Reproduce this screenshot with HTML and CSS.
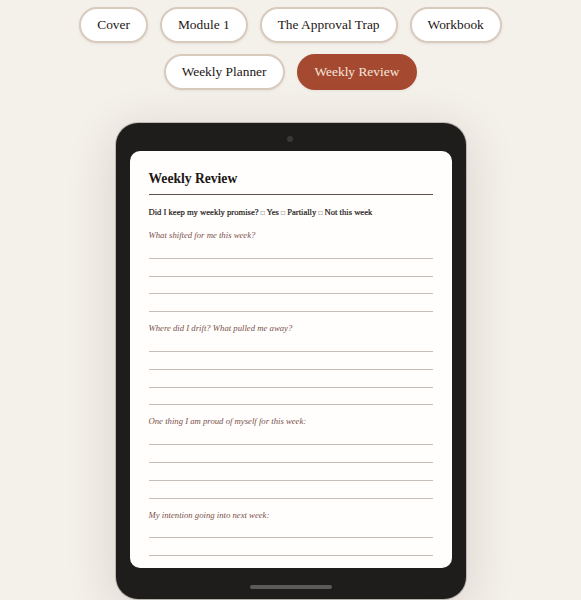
FILE: index.html
```html
<!DOCTYPE html>
<html lang="en">
<head>
<meta charset="utf-8">
<title>Weekly Review</title>
<link rel="stylesheet" href="styles.css">
</head>
<body>
<nav class="tabs">
  <button class="tab">Cover</button>
  <button class="tab">Module 1</button>
  <button class="tab">The Approval Trap</button>
  <button class="tab">Workbook</button>
  <button class="tab">Weekly Planner</button>
  <button class="tab active">Weekly Review</button>
</nav>
<div class="tablet">
  <div class="camera"></div>
  <div class="screen">
    <h1 class="title">Weekly Review</h1>
    <p class="promise">Did I keep my weekly promise? <span class="box">□</span> Yes <span class="box">□</span> Partially <span class="box">□</span> Not this week</p>
    <section class="block">
      <p class="prompt">What shifted for me this week?</p>
      <div class="line"></div><div class="line"></div><div class="line"></div><div class="line"></div>
    </section>
    <section class="block">
      <p class="prompt">Where did I drift? What pulled me away?</p>
      <div class="line"></div><div class="line"></div><div class="line"></div><div class="line"></div>
    </section>
    <section class="block">
      <p class="prompt">One thing I am proud of myself for this week:</p>
      <div class="line"></div><div class="line"></div><div class="line"></div><div class="line"></div>
    </section>
    <section class="block">
      <p class="prompt">My intention going into next week:</p>
      <div class="line"></div><div class="line"></div><div class="line"></div><div class="line"></div>
    </section>
  </div>
  <div class="homebar"></div>
</div>
</body>
</html>
```

FILE: styles.css
```css
* { box-sizing: border-box; }
html, body { height: 100%; }
body {
  margin: 0;
  background: #f4f0ea;
  font-family: "Liberation Serif", "DejaVu Serif", serif;
  color: #2a2320;
  overflow: hidden;
}
.tabs {
  max-width: 440px;
  margin: 0 auto;
  padding-top: 7px;
  display: flex;
  flex-wrap: wrap;
  justify-content: center;
  gap: 11px 12px;
}
.tab {
  height: 36px;
  padding: 0 16px;
  border: 2px solid #d8cabd;
  border-radius: 18px;
  background: #ffffff;
  font-family: "Liberation Serif", "DejaVu Serif", serif;
  font-size: 13.4px;
  color: #1c1613;
  box-shadow: 0 1px 3px rgba(80, 60, 40, 0.08);
}
.tab.active {
  background: #a54a31;
  border-color: #a54a31;
  color: #f6e6dc;
}
.tablet {
  width: 350px;
  margin: 33px auto 0;
  padding: 28px 14px 0;
  background: #1f1d1c;
  border-radius: 22px;
  position: relative;
  height: 476px;
  box-shadow: 0 10px 50px rgba(70, 50, 30, 0.16), 0 0 0 1px rgba(0,0,0,0.2);
}
.camera {
  position: absolute;
  top: 13px;
  left: 171px;
  width: 6px;
  height: 6px;
  border-radius: 50%;
  background: #3a3837;
}
.homebar {
  position: absolute;
  left: 134px;
  bottom: 10px;
  width: 82px;
  height: 4px;
  border-radius: 2px;
  background: #5c5a59;
}
.screen {
  background: #fffefd;
  border-radius: 10px;
  height: 417px;
  overflow: hidden;
  padding: 20px 19px 0;
}
.title {
  margin: 0;
  font-size: 13.6px;
  line-height: 16px;
  font-weight: bold;
  color: #1e1816;
  padding-bottom: 7px;
  border-bottom: 1.5px solid #5f514a;
}
.promise {
  margin: 11px 0 2px;
  font-size: 8.6px;
  line-height: 12px;
  font-weight: normal;
  color: #1a1412;
  -webkit-text-stroke: 0.2px #1a1412;
}
.box {
  font-size: 6.5px;
  -webkit-text-stroke: 0;
  color: #4a403b;
}
.block { margin: 0; }
.prompt {
  margin: 10px 0 0;
  font-size: 8.7px;
  line-height: 12px;
  font-style: italic;
  color: #7a5048;
}
.line {
  height: 17.8px;
  border-bottom: 1px solid #c7beb7;
}
```
